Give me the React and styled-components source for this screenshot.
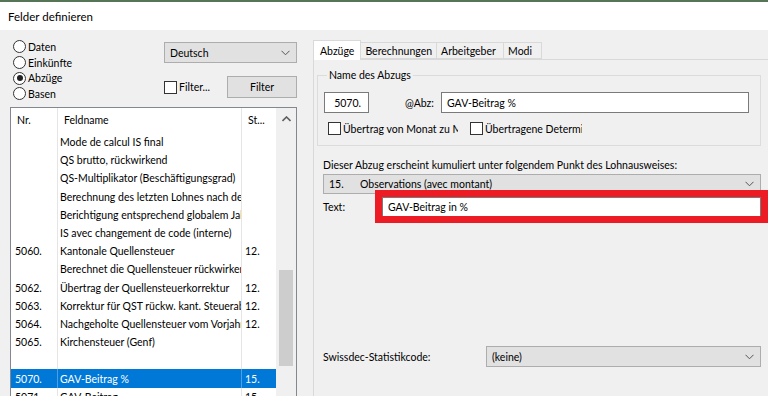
import React from "react";
import styled, { createGlobalStyle } from "styled-components";

const GlobalStyle = createGlobalStyle`
  html, body { margin: 0; padding: 0; }
  body {
    background: #f0f0f0;
    font-family: "Lato", "Noto Sans", sans-serif;
    font-size: 10.5px;
    color: #000;
  }
  * { box-sizing: border-box; }
`;

const Window = styled.div`
  width: 768px;
  height: 396px;
  overflow: hidden;
  border-top: 2px solid #567556;
  background: #f0f0f0;
  display: flex;
  flex-direction: column;
`;

const TitleBar = styled.div`
  height: 28px;
  flex: none;
  background: #fff;
  display: flex;
  align-items: center;
  padding-left: 8px;
  font-size: 11.5px;
`;

const Body = styled.div`
  flex: 1;
  display: flex;
  min-height: 0;
`;

const LeftCol = styled.div`
  width: 287px;
  margin-left: 10px;
  display: flex;
  flex-direction: column;
`;

const TopControls = styled.div`
  height: 77px;
  flex: none;
  display: flex;
`;

const RadioGroup = styled.div`
  width: 154px;
  padding-top: 9px;
  padding-left: 3px;
  display: flex;
  flex-direction: column;
`;

const RadioRow = styled.label`
  height: 15.7px;
  display: flex;
  align-items: center;
  gap: 2px;
`;

const RadioCircle = styled.span`
  width: 13px;
  height: 13px;
  border-radius: 50%;
  border: 1px solid #333;
  background: #fff;
  display: flex;
  align-items: center;
  justify-content: center;
  &::after {
    content: "";
    width: 6px;
    height: 6px;
    border-radius: 50%;
    background: ${(p) => (p.$checked ? "#222" : "transparent")};
  }
`;

const RightControls = styled.div`
  flex: 1;
  padding-top: 12px;
  display: flex;
  flex-direction: column;
  gap: 13px;
`;

const SelectBox = styled.div`
  height: ${(p) => p.$h || 21}px;
  flex: ${(p) => (p.$grow ? "1" : "none")};
  background: #e1e1e1;
  border: 1px solid #adadad;
  display: flex;
  align-items: center;
  padding-left: 5px;
  padding-right: 6px;
`;

const SelectText = styled.span`
  flex: 1;
  white-space: nowrap;
  overflow: hidden;
`;

const SelectNum = styled.span`
  width: 31px;
  flex: none;
`;

const Chevron = () => (
  <svg width="9" height="6" viewBox="0 0 9 6">
    <polyline points="0.5,0.8 4.5,4.8 8.5,0.8" fill="none" stroke="#555" strokeWidth="1" />
  </svg>
);

const FilterRow = styled.div`
  display: flex;
  align-items: center;
  justify-content: space-between;
`;

const CheckLabel = styled.label`
  display: flex;
  align-items: center;
  gap: 2px;
  white-space: nowrap;
  overflow: hidden;
  width: ${(p) => (p.$w ? p.$w + "px" : "auto")};
  flex: none;
`;

const CheckBox = styled.span`
  width: 13px;
  height: 13px;
  flex: none;
  border: 1px solid #333;
  background: #fff;
`;

const Button = styled.div`
  width: 70px;
  height: 22px;
  background: #e1e1e1;
  border: 1px solid #adadad;
  display: flex;
  align-items: center;
  justify-content: center;
`;

const ListBox = styled.div`
  flex: 1;
  border: 1px solid #828790;
  border-bottom: none;
  background: #fff;
  display: flex;
  min-height: 0;
`;

const Table = styled.div`
  flex: 1;
  overflow: hidden;
`;

const HeaderRow = styled.div`
  height: 25px;
  display: grid;
  grid-template-columns: 47px 184px 34px;
`;

const HeaderCell = styled.div`
  height: 25px;
  padding: 6px 0 0 6px;
  border-right: ${(p) => (p.$last ? "none" : "1px solid #e5e5e5")};
  white-space: nowrap;
  overflow: hidden;
`;

const Row = styled.div`
  height: 18.2px;
  display: grid;
  grid-template-columns: 47px 184px 34px;
  background: ${(p) => (p.$selected ? "#0078d7" : "transparent")};
  color: ${(p) => (p.$selected ? "#fff" : "#000")};
`;

const Cell = styled.div`
  padding-left: ${(p) => p.$pl || 3}px;
  display: flex;
  align-items: center;
  white-space: nowrap;
  overflow: hidden;
  border-right: ${(p) =>
    p.$last ? "none" : `1px solid ${p.$selected ? "#4d9fe3" : "#e5e5e5"}`};
`;

const ScrollBar = styled.div`
  width: 20px;
  flex: none;
  background: #f0f0f0;
  display: flex;
  flex-direction: column;
  align-items: center;
`;

const ScrollArrow = styled.div`
  height: 20px;
  width: 100%;
  display: flex;
  align-items: center;
  justify-content: center;
  padding-top: 2px;
`;

const Thumb = styled.div`
  width: 14px;
  height: 96px;
  margin-top: 142px;
  background: #cdcdcd;
`;

const RightCol = styled.div`
  flex: 1;
  margin-left: 16px;
  margin-right: -10px;
  padding-top: 10px;
  display: flex;
  flex-direction: column;
`;

const TabStrip = styled.div`
  height: 19px;
  display: flex;
  align-items: flex-end;
  flex: none;
`;

const Tab = styled.div`
  height: ${(p) => (p.$active ? 20 : 17)}px;
  min-width: ${(p) => p.$min || 0}px;
  padding: 0 ${(p) => (p.$active ? 6 : 4)}px;
  margin-bottom: ${(p) => (p.$active ? -1 : 0)}px;
  background: ${(p) => (p.$active ? "#fff" : "#f0f0f0")};
  border: 1px solid #d9d9d9;
  border-bottom: ${(p) => (p.$active ? "none" : "1px solid #d9d9d9")};
  margin-left: ${(p) => (p.$first ? 0 : -1)}px;
  display: flex;
  align-items: center;
  position: relative;
  z-index: ${(p) => (p.$active ? 1 : 0)};
`;

const TabPanel = styled.div`
  flex: 1;
  border: 1px solid #d9d9d9;
  border-bottom: none;
  background: #f0f0f0;
  padding: 9px 16px 0 3px;
  display: flex;
  flex-direction: column;
`;

const GroupBox = styled.fieldset`
  margin: 0;
  border: 1px solid #dcdcdc;
  padding: 11px 11px 10px 6px;
  min-width: 0;
`;

const Legend = styled.legend`
  padding: 0 2px;
  margin-left: 3px;
`;

const NameRow = styled.div`
  display: flex;
  align-items: center;
`;

const TextInput = styled.div`
  height: ${(p) => p.$h || 21}px;
  width: ${(p) => (p.$w ? p.$w + "px" : "auto")};
  flex: ${(p) => (p.$w ? "none" : "1")};
  background: #fff;
  border: 1px solid #7a7a7a;
  display: flex;
  align-items: center;
  justify-content: ${(p) => (p.$right ? "flex-end" : "flex-start")};
  padding: 0 ${(p) => (p.$right ? 7 : 5)}px 0 5px;
  white-space: nowrap;
  position: relative;
`;

const InlineLabel = styled.span`
  width: ${(p) => p.$w}px;
  flex: none;
  text-align: ${(p) => p.$align || "left"};
  padding-right: ${(p) => p.$pr || 0}px;
`;

const CheckRow = styled.div`
  display: flex;
  align-items: center;
  margin-top: 9px;
  padding-left: 4px;
  gap: 12px;
`;

const Section = styled.div`
  flex: 1;
  padding-left: 6px;
  display: flex;
  flex-direction: column;
`;

const Caption = styled.div`
  margin-top: ${(p) => p.$mt || 0}px;
  height: 18px;
  display: flex;
  align-items: center;
  white-space: nowrap;
`;

const FieldRow = styled.div`
  display: flex;
  align-items: center;
  margin-top: ${(p) => p.$mt || 0}px;
`;

const Highlighted = styled(TextInput)`
  &::after {
    content: "";
    position: absolute;
    left: -8px;
    right: -8px;
    top: -8px;
    bottom: -7px;
    border: 7px solid #ed1c24;
    pointer-events: none;
  }
`;

const rows = [
  ["", "Mode de calcul IS final", ""],
  ["", "QS brutto, rückwirkend", ""],
  ["", "QS-Multiplikator (Beschäftigungsgrad)", ""],
  ["", "Berechnung des letzten Lohnes nach dem Austritt", ""],
  ["", "Berichtigung entsprechend globalem Jahreslohn", ""],
  ["", "IS avec changement de code (interne)", ""],
  ["5060.", "Kantonale Quellensteuer", "12."],
  ["", "Berechnet die Quellensteuer rückwirkend", ""],
  ["5062.", "Übertrag der Quellensteuerkorrektur", "12."],
  ["5063.", "Korrektur für QST rückw. kant. Steuerabzug", "12."],
  ["5064.", "Nachgeholte Quellensteuer vom Vorjahr", "12."],
  ["5065.", "Kirchensteuer (Genf)", ""],
  ["", "", ""],
  ["5070.", "GAV-Beitrag %", "15.", true],
  ["5071.", "GAV-Beitrag", "15."],
];

export default function App() {
  return (
    <>
      <GlobalStyle />
      <Window>
        <TitleBar>Felder definieren</TitleBar>
        <Body>
          <LeftCol>
            <TopControls>
              <RadioGroup>
                {["Daten", "Einkünfte", "Abzüge", "Basen"].map((r) => (
                  <RadioRow key={r}>
                    <RadioCircle $checked={r === "Abzüge"} />
                    {r}
                  </RadioRow>
                ))}
              </RadioGroup>
              <RightControls>
                <SelectBox $h={21}>
                  <SelectText>Deutsch</SelectText>
                  <Chevron />
                </SelectBox>
                <FilterRow>
                  <CheckLabel>
                    <CheckBox />
                    Filter...
                  </CheckLabel>
                  <Button>Filter</Button>
                </FilterRow>
              </RightControls>
            </TopControls>
            <ListBox>
              <Table>
                <HeaderRow>
                  <HeaderCell>Nr.</HeaderCell>
                  <HeaderCell>Feldname</HeaderCell>
                  <HeaderCell $last>St...</HeaderCell>
                </HeaderRow>
                {rows.map(([nr, name, st, sel], i) => (
                  <Row key={i} $selected={sel}>
                    <Cell $pl={4} $selected={sel}>{nr}</Cell>
                    <Cell $pl={2} $selected={sel}>{name}</Cell>
                    <Cell $pl={3} $last>{st}</Cell>
                  </Row>
                ))}
              </Table>
              <ScrollBar>
                <ScrollArrow>
                  <svg width="9" height="6" viewBox="0 0 9 6">
                    <polyline points="0.5,5 4.5,1 8.5,5" fill="none" stroke="#606060" strokeWidth="1.6" />
                  </svg>
                </ScrollArrow>
                <Thumb />
              </ScrollBar>
            </ListBox>
          </LeftCol>
          <RightCol>
            <TabStrip>
              <Tab $active $first>Abzüge</Tab>
              <Tab>Berechnungen</Tab>
              <Tab $min={68}>Arbeitgeber</Tab>
              <Tab $min={39}>Modi</Tab>
            </TabStrip>
            <TabPanel>
              <GroupBox>
                <Legend>Name des Abzugs</Legend>
                <NameRow>
                  <TextInput $w={45} $right>5070.</TextInput>
                  <InlineLabel $w={72} $align="right" $pr={7}>@Abz:</InlineLabel>
                  <TextInput>GAV-Beitrag %</TextInput>
                </NameRow>
                <CheckRow>
                  <CheckLabel $w={130}>
                    <CheckBox />
                    Übertrag von Monat zu Monat
                  </CheckLabel>
                  <CheckLabel $w={112}>
                    <CheckBox />
                    Übertragene Determinationen
                  </CheckLabel>
                </CheckRow>
              </GroupBox>
              <Section>
                <Caption $mt={10}>Dieser Abzug erscheint kumuliert unter folgendem Punkt des Lohnausweises:</Caption>
                <SelectBox $h={20}>
                  <SelectNum>15.</SelectNum>
                  <SelectText>Observations (avec montant)</SelectText>
                  <Chevron />
                </SelectBox>
                <FieldRow $mt={3}>
                  <InlineLabel $w={59}>Text:</InlineLabel>
                  <Highlighted $h={20}>GAV-Beitrag in %</Highlighted>
                </FieldRow>
                <FieldRow $mt={129}>
                  <InlineLabel $w={163}>Swissdec-Statistikcode:</InlineLabel>
                  <SelectBox $h={21} $grow>
                    <SelectText>(keine)</SelectText>
                    <Chevron />
                  </SelectBox>
                </FieldRow>
              </Section>
            </TabPanel>
          </RightCol>
        </Body>
      </Window>
    </>
  );
}
